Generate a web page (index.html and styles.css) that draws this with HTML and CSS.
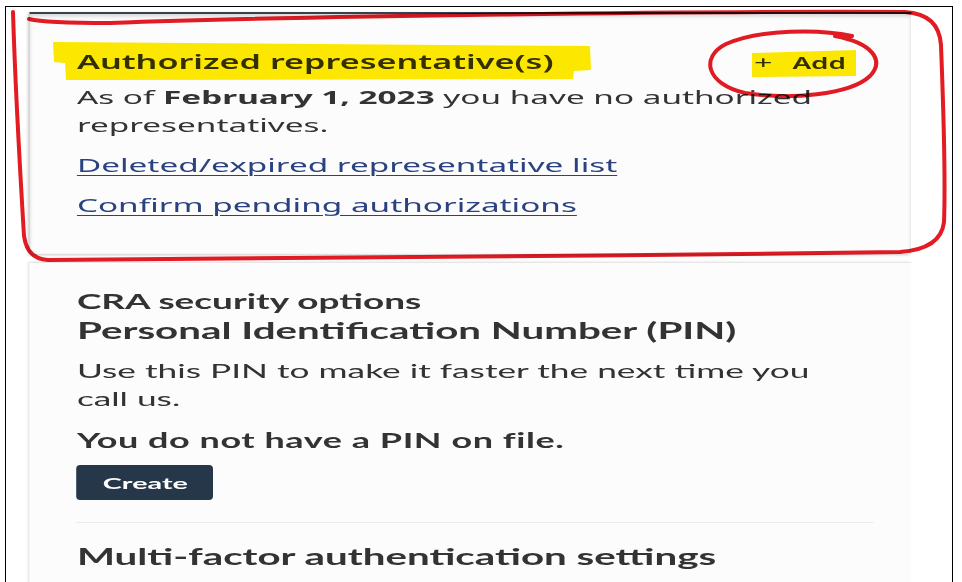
FILE: index.html
```html
<!DOCTYPE html>
<html lang="en">
<head>
<meta charset="utf-8">
<title>Profile – representatives and security</title>
<link rel="stylesheet" href="styles.css">
</head>
<body>
<div class="frame">
  <div class="sheet">
    <section class="card card-reps">
      <div class="card-head">
        <h2 class="reps-title">Authorized representative(s)</h2>
        <button class="add-btn" type="button"><span class="plus">+</span>Add</button>
      </div>
      <p class="reps-text">As of <strong>February 1, 2023</strong> you have no authorized representatives.</p>
      <p class="link-row"><a href="#">Deleted/expired representative list</a></p>
      <p class="link-row"><a href="#">Confirm pending authorizations</a></p>
    </section>
    <section class="card card-security">
      <h2 class="sec-kicker">CRA security options</h2>
      <h3 class="sec-title">Personal Identification Number (PIN)</h3>
      <p class="sec-text">Use this PIN to make it faster the next time you call us.</p>
      <p class="sec-status">You do not have a PIN on file.</p>
      <button class="btn-primary" type="button">Create</button>
      <hr class="divider">
      <h3 class="sec-title">Multi-factor authentication settings</h3>
    </section>
  </div>
</div>
<svg class="annotations" width="962" height="582" viewBox="0 0 962 582" aria-hidden="true">
  <polygon class="hl" points="53,42 590,46 591,70 574,71 573,79 66,80 65,63 54,62"/>
  <polygon class="hl" points="752,53 856,50 856,76 752,77"/>
  <path class="pen" d="M13 12 C15 80 20 170 24 236 Q27 259 48 260 C200 260 600 256 900 252 Q941 249 944 222 C946 170 943 100 941 45 Q939 14 905 12 C700 11 300 16 110 23 Q45 23 29 19"/>
  <path class="pen" d="M852 36 C820 29 760 29 726 44 C700 57 706 84 745 93 C790 100 850 95 870 76 C885 60 872 43 835 36"/>
</svg>
</body>
</html>
```

FILE: styles.css
```css
html, body {
  margin: 0;
  padding: 0;
  background: #ffffff;
}

body {
  position: relative;
  width: 962px;
  height: 582px;
  overflow: hidden;
  color: #333333;
}

.frame {
  margin: 6px 0 0 5px;
  width: 948px;
  height: 600px;
  box-sizing: border-box;
  border: 1px solid #000000;
  border-bottom: 0;
}

/* the captured page was stretched horizontally */
.sheet {
  width: 525.6px;
  box-sizing: border-box;
  padding: 5px 0 0 12.8px;
  transform: scaleX(1.8);
  transform-origin: 0 0;
}

.card {
  width: 490.5px;
  box-sizing: border-box;
  background: #fcfcfc;
}

.card-reps {
  border-top: 2px solid #35414e;
  padding: 33px 21.1px 35.4px 26.6px;
  box-shadow: inset 0 2px 3px rgba(0, 0, 0, 0.18), -1px 1px 2px rgba(0, 0, 0, 0.22);
}

.card-head {
  display: flex;
  justify-content: space-between;
  align-items: baseline;
}

.reps-title {
  margin: 0;
  font: 600 19px/30px "Noto Sans", "Open Sans", sans-serif;
  color: #333333;
}

.add-btn {
  margin: 0;
  padding: 0 15.5px 0 0;
  border: 0;
  background: none;
  font: 600 15.5px/30px "Noto Sans", "Open Sans", sans-serif;
  color: #333333;
}

.plus {
  font-weight: 400;
  font-size: 18px;
  margin-right: 11px;
}

.reps-text {
  margin: 4.6px 0 0;
  font: 400 18.5px/28px "Noto Sans", "Open Sans", sans-serif;
}

.reps-text strong {
  font-weight: 700;
}

.link-row {
  margin: 12px 0 0;
  font: 400 18.5px/28px "Noto Sans", "Open Sans", sans-serif;
}

.link-row a {
  color: #2b4281;
  text-decoration: underline;
  text-decoration-thickness: 1px;
  text-underline-offset: 3px;
}

.card-security {
  margin-top: 8px;
  height: 330px;
  border-top: 1px solid #e6e6e6;
  padding: 23.5px 21.1px 0 26.6px;
  box-shadow: -1px 0 2px rgba(0, 0, 0, 0.12);
}

.sec-kicker {
  margin: 0;
  font: 700 20.5px/30px Lato, sans-serif;
  color: #333333;
}

.sec-title {
  margin: 0;
  font: 700 22.4px/30px Lato, sans-serif;
  color: #333333;
}

.sec-text {
  max-width: 425px;
  margin: 10.3px 0 0;
  font: 400 19.6px/28px Lato, sans-serif;
}

.sec-status {
  margin: 13px 0 0;
  font: 700 20px/28px Lato, sans-serif;
  letter-spacing: 0.3px;
}

.btn-primary {
  display: block;
  margin: 11.3px 0 0;
  width: 76.1px;
  height: 35px;
  padding: 0;
  border: 0;
  border-radius: 2.2px / 4px;
  background: #26374a;
  color: #ffffff;
  font: 700 16px/35px Lato, sans-serif;
  text-align: center;
}

.divider {
  margin: 22px 0 18.5px;
  height: 0;
  border: 0;
  border-top: 1px solid #ebebeb;
}

/* reviewer's marker annotations drawn over the capture */
.annotations {
  position: absolute;
  top: 0;
  left: 0;
  pointer-events: none;
  mix-blend-mode: multiply;
}

.hl {
  fill: #ffea00;
}

.pen {
  fill: none;
  stroke: #e31b23;
  stroke-width: 4;
  stroke-linecap: round;
  stroke-linejoin: round;
}
```
